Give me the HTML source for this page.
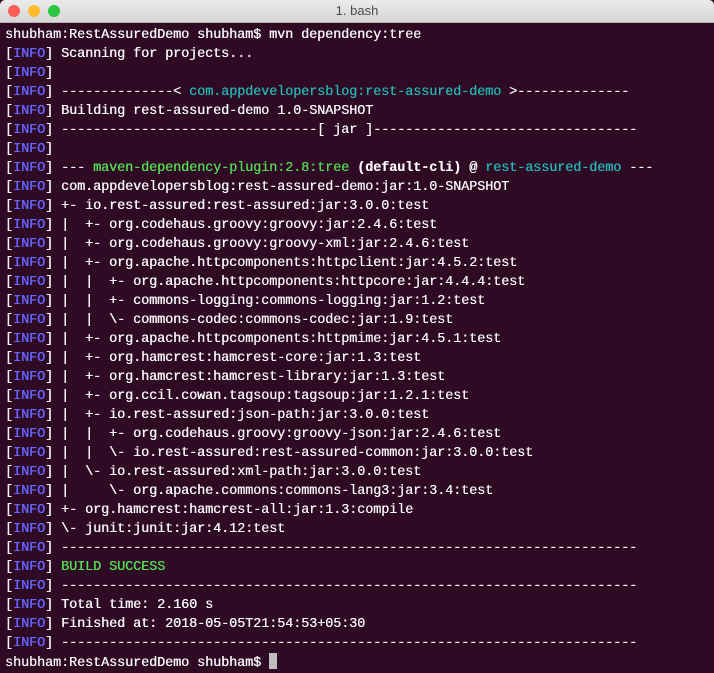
<!DOCTYPE html>
<html><head><meta charset="utf-8"><style>
html,body{margin:0;padding:0;width:714px;height:673px;overflow:hidden;background:#2f0a25;}
.tb{position:absolute;left:0;top:0;width:714px;height:22px;background:linear-gradient(#ececec,#d6d6d6);border-bottom:1px solid #b5b5b5;border-radius:5px 5px 0 0;}
.tb .t{position:absolute;left:0;right:0;top:3px;text-align:center;font:13px "Liberation Sans",sans-serif;color:#4a4a4a;}
.d{position:absolute;top:5px;width:12px;height:12px;border-radius:50%;}
pre{position:absolute;left:5px;top:26px;margin:0;font-family:"Liberation Mono",monospace;font-size:13.5px;letter-spacing:-0.1px;line-height:19px;color:#fafafa;text-shadow:0.3px 0 0 currentColor;}
.i{color:#6464ff}.c{color:#22b8b8}.g{color:#52e052}.b{font-weight:bold}
.cur{display:inline-block;width:8px;height:16px;background:#bdbdbd;vertical-align:-3px;}
</style></head><body>
<div class="tb"><div class="d" style="left:8px;background:#fc5f57"></div><div class="d" style="left:28px;background:#fdbc2e"></div><div class="d" style="left:48px;background:#28c840"></div><div class="t">1. bash</div></div>
<pre>shubham:RestAssuredDemo shubham$ mvn dependency:tree
[<span class="i">INFO</span>] Scanning for projects...
[<span class="i">INFO</span>]
[<span class="i">INFO</span>] --------------&lt; <span class="c">com.appdevelopersblog:rest-assured-demo</span> &gt;--------------
[<span class="i">INFO</span>] Building rest-assured-demo 1.0-SNAPSHOT
[<span class="i">INFO</span>] --------------------------------[ jar ]---------------------------------
[<span class="i">INFO</span>]
[<span class="i">INFO</span>] --- <span class="g">maven-dependency-plugin:2.8:tree</span> <span class="b">(default-cli)</span> @ <span class="c">rest-assured-demo</span> ---
[<span class="i">INFO</span>] com.appdevelopersblog:rest-assured-demo:jar:1.0-SNAPSHOT
[<span class="i">INFO</span>] +- io.rest-assured:rest-assured:jar:3.0.0:test
[<span class="i">INFO</span>] |  +- org.codehaus.groovy:groovy:jar:2.4.6:test
[<span class="i">INFO</span>] |  +- org.codehaus.groovy:groovy-xml:jar:2.4.6:test
[<span class="i">INFO</span>] |  +- org.apache.httpcomponents:httpclient:jar:4.5.2:test
[<span class="i">INFO</span>] |  |  +- org.apache.httpcomponents:httpcore:jar:4.4.4:test
[<span class="i">INFO</span>] |  |  +- commons-logging:commons-logging:jar:1.2:test
[<span class="i">INFO</span>] |  |  \- commons-codec:commons-codec:jar:1.9:test
[<span class="i">INFO</span>] |  +- org.apache.httpcomponents:httpmime:jar:4.5.1:test
[<span class="i">INFO</span>] |  +- org.hamcrest:hamcrest-core:jar:1.3:test
[<span class="i">INFO</span>] |  +- org.hamcrest:hamcrest-library:jar:1.3:test
[<span class="i">INFO</span>] |  +- org.ccil.cowan.tagsoup:tagsoup:jar:1.2.1:test
[<span class="i">INFO</span>] |  +- io.rest-assured:json-path:jar:3.0.0:test
[<span class="i">INFO</span>] |  |  +- org.codehaus.groovy:groovy-json:jar:2.4.6:test
[<span class="i">INFO</span>] |  |  \- io.rest-assured:rest-assured-common:jar:3.0.0:test
[<span class="i">INFO</span>] |  \- io.rest-assured:xml-path:jar:3.0.0:test
[<span class="i">INFO</span>] |     \- org.apache.commons:commons-lang3:jar:3.4:test
[<span class="i">INFO</span>] +- org.hamcrest:hamcrest-all:jar:1.3:compile
[<span class="i">INFO</span>] \- junit:junit:jar:4.12:test
[<span class="i">INFO</span>] ------------------------------------------------------------------------
[<span class="i">INFO</span>] <span class="g">BUILD SUCCESS</span>
[<span class="i">INFO</span>] ------------------------------------------------------------------------
[<span class="i">INFO</span>] Total time: 2.160 s
[<span class="i">INFO</span>] Finished at: 2018-05-05T21:54:53+05:30
[<span class="i">INFO</span>] ------------------------------------------------------------------------
shubham:RestAssuredDemo shubham$ <span class="cur"></span></pre>
</body></html>
